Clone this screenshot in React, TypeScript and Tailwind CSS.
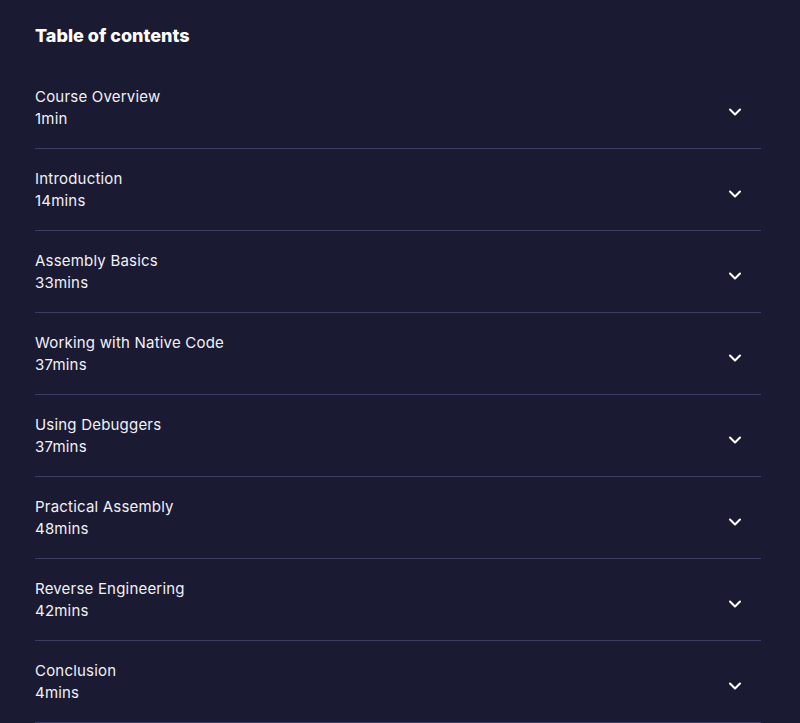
import React from 'react';

const sections = [
  { title: 'Course Overview', duration: '1min' },
  { title: 'Introduction', duration: '14mins' },
  { title: 'Assembly Basics', duration: '33mins' },
  { title: 'Working with Native Code', duration: '37mins' },
  { title: 'Using Debuggers', duration: '37mins' },
  { title: 'Practical Assembly', duration: '48mins' },
  { title: 'Reverse Engineering', duration: '42mins' },
  { title: 'Conclusion', duration: '4mins' },
];

const Chevron = () => (
  <svg className="h-5 w-5" viewBox="0 0 24 24" fill="none" stroke="currentColor" strokeWidth="2.5" strokeLinecap="round" strokeLinejoin="round">
    <path d="M6 9l6 6 6-6" />
  </svg>
);

export default function App() {
  return (
    <div className="min-h-screen bg-[#1b1a33] text-white pl-[35px] pr-[39px] pt-[25px]" style={{ fontFamily: 'Inter, "Noto Sans", sans-serif' }}>
      <h2 className="text-[18px] font-extrabold leading-[22px]">Table of contents</h2>
      <ul className="mt-[20px]">
        {sections.map((s) => (
          <li key={s.title} className="flex items-center justify-between border-b border-[#3d3c63] h-[82px]">
            <div className="flex flex-col text-[15px] leading-[22px] tracking-[0.2px] text-[#f1f1f5]">
              <span>{s.title}</span>
              <span>{s.duration}</span>
            </div>
            <button className="mr-[16px] mt-[8px] text-white" aria-label={`Expand ${s.title}`}>
              <Chevron />
            </button>
          </li>
        ))}
      </ul>
    </div>
  );
}
